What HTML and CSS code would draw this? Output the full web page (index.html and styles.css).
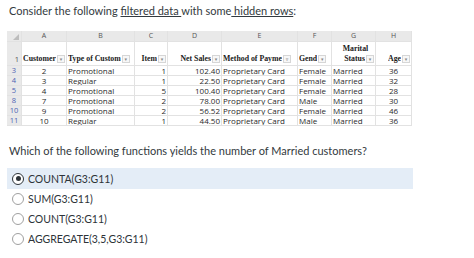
FILE: index.html
```html
<!DOCTYPE html>
<html>
<head>
<meta charset="utf-8">
<link rel="stylesheet" href="styles.css">
</head>
<body>
<div class="page">
  <p class="intro">Consider the following <u>filtered data </u>with some<u> hidden rows</u>:</p>
  <div class="sheet">
    <div class="lt corner"><span class="tri"></span></div>
    <div class="lt">A</div><div class="lt">B</div><div class="lt">C</div><div class="lt">D</div><div class="lt">E</div><div class="lt">F</div><div class="lt">G</div><div class="lt">H</div>

    <div class="rn dark">1</div>
    <div class="hc"><span class="ht">Customer</span><span class="dd">▾</span></div>
    <div class="hc"><span class="ht">Type of Custom</span><span class="dd">▾</span></div>
    <div class="hc end"><span class="ht">Item</span><span class="dd">▾</span></div>
    <div class="hc end"><span class="ht">Net Sales</span><span class="dd">▾</span></div>
    <div class="hc"><span class="ht">Method of Payme</span><span class="dd ft">▿</span></div>
    <div class="hc"><span class="ht">Gend</span><span class="dd">▾</span></div>
    <div class="hc end two"><span class="top">Marital</span><span class="ht">Status</span><span class="dd">▾</span></div>
    <div class="hc end"><span class="ht">Age</span><span class="dd">▾</span></div>

    <div class="rn">3</div><div class="c">2</div><div>Promotional</div><div class="r">1</div><div class="r">102.40</div><div>Proprietary Card</div><div>Female</div><div>Married</div><div class="c">36</div>
    <div class="rn">4</div><div class="c">3</div><div>Regular</div><div class="r">1</div><div class="r">22.50</div><div>Proprietary Card</div><div>Female</div><div>Married</div><div class="c">32</div>
    <div class="rn">5</div><div class="c">4</div><div>Promotional</div><div class="r">5</div><div class="r">100.40</div><div>Proprietary Card</div><div>Female</div><div>Married</div><div class="c">28</div>
    <div class="rn">8</div><div class="c">7</div><div>Promotional</div><div class="r">2</div><div class="r">78.00</div><div>Proprietary Card</div><div>Male</div><div>Married</div><div class="c">30</div>
    <div class="rn">10</div><div class="c">9</div><div>Promotional</div><div class="r">2</div><div class="r">56.52</div><div>Proprietary Card</div><div>Female</div><div>Married</div><div class="c">46</div>
    <div class="rn">11</div><div class="c">10</div><div>Regular</div><div class="r">1</div><div class="r">44.50</div><div>Proprietary Card</div><div>Male</div><div>Married</div><div class="c">36</div>
  </div>
  <p class="question">Which of the following functions yields the number of Married customers?</p>
  <div class="options">
    <div class="opt selected"><span class="radio"><span class="dot"></span></span>COUNTA(G3:G11)</div>
    <div class="opt"><span class="radio"></span>SUM(G3:G11)</div>
    <div class="opt"><span class="radio"></span>COUNT(G3:G11)</div>
    <div class="opt"><span class="radio"></span>AGGREGATE(3,5,G3:G11)</div>
  </div>
</div>
</body>
</html>
```

FILE: styles.css
```css
html, body {
  margin: 0;
  padding: 0;
  background: #ffffff;
}
.page {
  padding: 4px 0 0 9px;
  font-family: Lato, "Open Sans", sans-serif;
  color: #333a40;
}
.intro {
  margin: 0;
  font-size: 11px;
  line-height: 14px;
}
.intro u {
  text-decoration-thickness: 1px;
  text-underline-offset: 1px;
}
.sheet {
  margin: 13px 0 0 -2px;
  display: grid;
  grid-template-columns: 14px 44px 67px 32px 53px 75px 33px 43px 35px;
  grid-template-rows: 10px 23px repeat(6, 9px);
  gap: 1px;
  padding: 0 1px 1px 0;
  width: max-content;
  background: #e2e2e2;
  font-family: "Open Sans", "Liberation Sans", sans-serif;
  font-size: 8px;
  line-height: 9px;
  color: #2a2a2a;
}
.sheet > div {
  background: #fff;
  white-space: nowrap;
  overflow: hidden;
  padding: 0 1px;
}
.sheet > .lt {
  background: #e9e9e9;
  text-align: center;
  line-height: 10px;
  font-size: 7px;
  color: #555;
}
.sheet > .corner { position: relative; }
.tri {
  position: absolute;
  right: 2px;
  bottom: 1px;
  width: 0;
  height: 0;
  border-left: 6px solid transparent;
  border-bottom: 6px solid #bdbdbd;
}
.sheet > .rn {
  background: #e9e9e9;
  text-align: center;
  color: #4b63b3;
  font-size: 7.5px;
  padding: 0;
}
.sheet > .rn.dark {
  color: #555;
  display: flex;
  align-items: flex-end;
  justify-content: flex-end;
  padding: 0 2px 1px 0;
}
.sheet > .hc {
  display: flex;
  align-items: flex-end;
  padding: 0 0 1px 1px;
  font-family: "Liberation Serif", serif;
  font-weight: bold;
  font-size: 7.8px;
  line-height: 10px;
  color: #1a1a1a;
}
.sheet > .hc.end { justify-content: flex-end; padding-right: 1px; }
.ht {
  overflow: hidden;
  flex: 0 1 auto;
}
.dd {
  flex: none;
  width: 6px;
  height: 6px;
  margin: 0 0 1px 1px;
  border: 1px solid #d6d6d6;
  background: #f7f7f7;
  font-family: "DejaVu Sans", sans-serif;
  font-weight: normal;
  font-size: 5px;
  line-height: 6px;
  text-align: center;
  color: #888;
}
.dd.ft { color: #555; }
.sheet > .two {
  flex-wrap: wrap;
  align-content: flex-end;
}
.top {
  width: 100%;
  text-align: center;
  padding-left: 4px;
}
.sheet > .c { text-align: center; }
.sheet > .r { text-align: right; }
.question {
  margin: 18px 0 0;
  font-size: 11px;
  line-height: 14px;
}
.options {
  margin: 10px 0 0 -2px;
  width: 406px;
}
.opt {
  display: flex;
  align-items: center;
  height: 20px;
  padding-left: 5px;
  font-size: 10.5px;
  color: #2d3338;
}
.opt.selected {
  background: #e4edf7;
  height: 21px;
}
.radio {
  flex: none;
  box-sizing: border-box;
  width: 12px;
  height: 12px;
  border-radius: 50%;
  border: 1px solid #a0a0a0;
  background: #fff;
  margin-right: 4px;
  display: flex;
  align-items: center;
  justify-content: center;
}
.selected .radio {
  border: 1.5px solid #2d3338;
}
.dot {
  width: 5px;
  height: 5px;
  border-radius: 50%;
  background: #2d3338;
}
```
